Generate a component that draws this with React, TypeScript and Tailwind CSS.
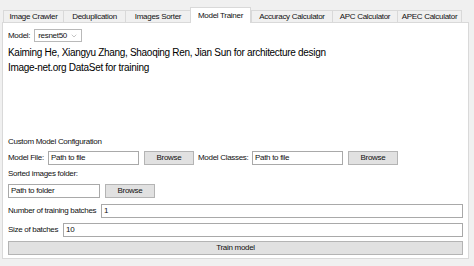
import { ChevronDown } from "lucide-react";

const tabs = [
  { label: "Image Crawler", w: "w-[60px]" },
  { label: "Deduplication", w: "w-[62px]" },
  { label: "Images Sorter", w: "w-[65px]" },
  { label: "Model Trainer", w: "w-[61px]", active: true },
  { label: "Accuracy Calculator", w: "w-[81px]" },
  { label: "APC Calculator", w: "w-[65px]" },
  { label: "APEC Calculator", w: "w-[65px]" },
];

const ui = "font-['Liberation_Sans',Arial,sans-serif] text-[8px] tracking-[-0.3px] text-[#111]";

const TextInput = ({ value, className }: { value: string; className: string }) => (
  <div className={`h-[14px] border border-[#a9a9a9] bg-white pl-[2px] flex items-center ${className}`}>
    {value}
  </div>
);

const Button = ({ label, className }: { label: string; className: string }) => (
  <div className={`h-[14px] border border-[#b4b4b4] bg-[#e1e1e1] flex items-center justify-center ${className}`}>
    {label}
  </div>
);

const App = () => {
  return (
    <div className={`w-[474px] h-[266px] bg-[#f0f0f0] pt-[6px] pl-[2px] ${ui}`}>
      {/* Tab bar */}
      <div className="flex items-end h-[16px] pl-[1px]">
        {tabs.map((t) =>
          t.active ? (
            <div
              key={t.label}
              className={`${t.w} h-[16px] bg-white border border-b-0 border-[#d9d9d9] flex items-center justify-center -mb-px relative z-10`}
            >
              {t.label}
            </div>
          ) : (
            <div
              key={t.label}
              className={`${t.w} h-[12px] bg-[#f0f0f0] border border-b-0 border-r-0 last:border-r border-[#d9d9d9] flex items-center justify-center`}
            >
              {t.label}
            </div>
          )
        )}
      </div>

      {/* Panel */}
      <div className="w-[467px] h-[237px] bg-white border border-[#d9d9d9] pt-[6px] pl-[5px] pr-[5px]">
        <div className="flex items-center h-[13px] gap-[4px]">
          <span>Model:</span>
          <div className="w-[48px] h-[13px] border border-[#b9b9b9] bg-white flex items-center justify-between pl-[3px] pr-[3px]">
            <span>resnet50</span>
            <ChevronDown className="w-[8px] h-[8px] text-[#888]" strokeWidth={1.5} />
          </div>
        </div>

        <div className="mt-[3px] font-['Liberation_Sans',Arial,sans-serif] text-[10px] tracking-[-0.3px] leading-[15px] text-black">
          <div>Kaiming He, Xiangyu Zhang, Shaoqing Ren, Jian Sun for architecture design</div>
          <div>Image-net.org DataSet for training</div>
        </div>

        <div className="mt-[61px] h-[12px] leading-[12px]">Custom Model Configuration</div>

        <div className="mt-[3px] flex items-center">
          <span className="w-[40px]">Model File:</span>
          <TextInput value="Path to file" className="w-[91px]" />
          <Button label="Browse" className="w-[50px] ml-[5px]" />
          <span className="w-[54px] ml-[4px]">Model Classes:</span>
          <TextInput value="Path to file" className="w-[91px]" />
          <Button label="Browse" className="w-[50px] ml-[5px]" />
        </div>

        <div className="mt-[3px] h-[12px] leading-[12px]">Sorted images folder:</div>

        <div className="mt-[4px] flex items-center">
          <TextInput value="Path to folder" className="w-[92px]" />
          <Button label="Browse" className="w-[50px] ml-[5px]" />
        </div>

        <div className="mt-[6px] flex items-center">
          <span className="w-[93px]">Number of training batches</span>
          <TextInput value="1" className="flex-1 h-[13px]" />
        </div>

        <div className="mt-[5px] flex items-center">
          <span className="w-[55px]">Size of batches</span>
          <TextInput value="10" className="flex-1 h-[13px]" />
        </div>

        <Button label="Train model" className="mt-[4px] w-full" />
      </div>
    </div>
  );
};

export default App;
